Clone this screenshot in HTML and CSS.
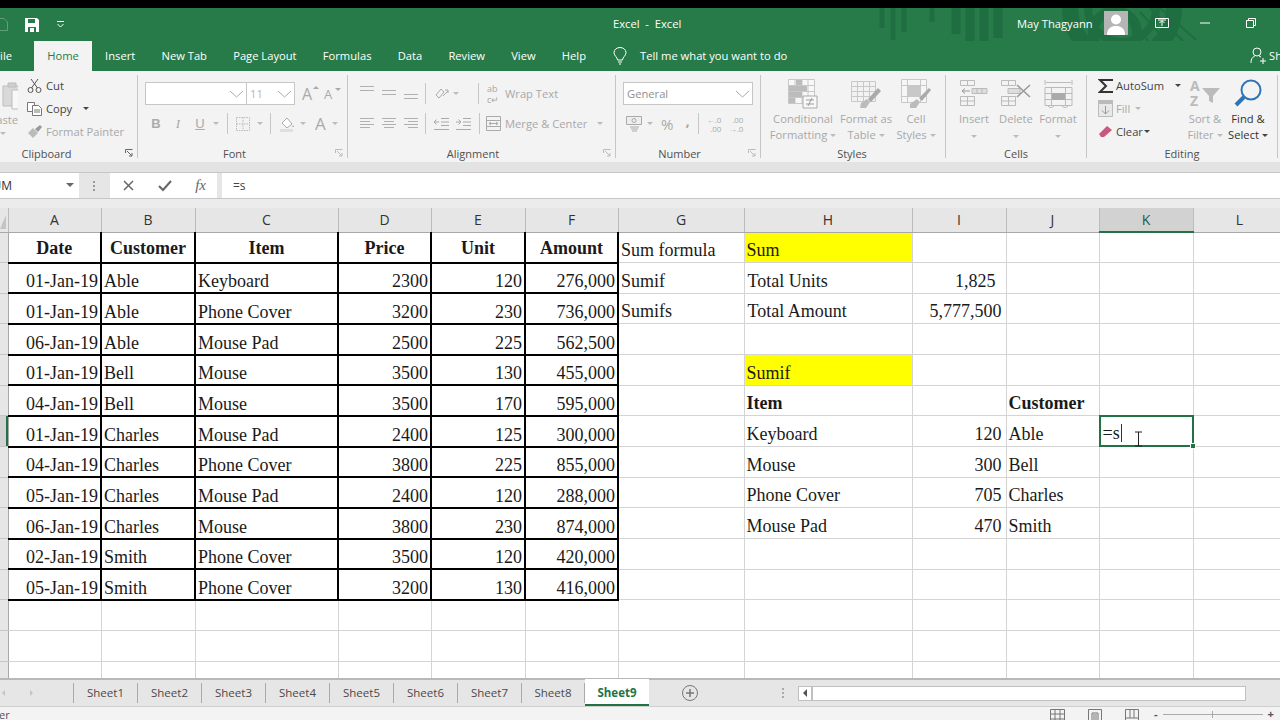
FILE: index.html
```html
<!DOCTYPE html>
<html lang="en">
<head>
<meta charset="utf-8">
<title>Excel - Excel</title>
<link rel="stylesheet" href="styles.css">
</head>
<body>
<div class="app">
  <div class="blackbar"></div>
  <header class="titlebar">
    <svg class="deco" width="400" height="63" viewBox="0 0 400 63" fill="none" stroke="#1f6e41">
      <g stroke-width="5"><path d="M22 0v20M33 0v32M44 0v24"/><path d="M72 0v14" /></g>
      <g stroke-width="9"><path d="M96 0v26M110 0v34M124 0v36M138 0v30"/></g>
      <circle cx="262" cy="0" r="52" stroke-width="16"/>
      <circle cx="262" cy="0" r="34" stroke-width="8"/>
      <circle cx="255" cy="25" r="22" stroke-width="10"/>
      <g stroke-width="2"><path d="M290 0l40 40M300 0l36 32M280 4l40 44M270 12l36 42"/></g>
    </svg>
    <div class="qat">
      <svg class="newdoc" width="8" height="13" viewBox="0 0 8 13" fill="none" stroke="#5f9f79"><path d="M-2 .5h6l3.500 3.500v8.500h-9.500"/></svg>
      <svg class="save" width="16" height="16" viewBox="0 0 16 16"><path d="M1 1h12l2 2v12H1z" fill="#fff"/><path d="M4 2h7v4H4z" fill="#267b49"/><path d="M4 10h8v5H4z" fill="#267b49"/><path d="M6 11h4v4H6z" fill="#fff"/></svg>
      <svg class="qatmore" width="9" height="9" viewBox="0 0 9 9" fill="none" stroke="#fff"><path d="M1 1.500h7"/><path d="M1.500 4l3 3 3-3"/></svg>
    </div>
    <div class="doc">Excel&nbsp; -&nbsp; Excel</div>
    <div class="account">
      <span class="user">May Thagyann</span>
      <span class="avatar"><svg width="24" height="24" viewBox="0 0 24 24" fill="#fff"><circle cx="12" cy="8.500" r="5"/><path d="M3 24c0-6 3-8 7-9h4c4 1 7 3 7 9z"/></svg></span>
      <svg class="winbtn first" width="14" height="12" viewBox="0 0 14 12" fill="none" stroke="#fff"><path d="M.5 1.500h13v9H.5z"/><path d="M7 9V4M4.500 6L7 3.500 9.500 6M3 3h8" /></svg>
      <svg class="winbtn min" width="10" height="2" viewBox="0 0 10 2"><path d="M0 1h10" stroke="#fff"/></svg>
      <svg class="winbtn rest" width="10" height="10" viewBox="0 0 10 10" fill="none" stroke="#fff"><path d="M.5 2.500h7v7h-7z"/><path d="M2.500 2.500v-2h7v7h-2"/></svg>
    </div>
  </header>
  <nav class="tabs">
    <span class="tab filetab">File</span>
    <span class="tab active">Home</span>
    <span class="tab">Insert</span>
    <span class="tab">New Tab</span>
    <span class="tab">Page Layout</span>
    <span class="tab">Formulas</span>
    <span class="tab">Data</span>
    <span class="tab">Review</span>
    <span class="tab">View</span>
    <span class="tab">Help</span>
    <svg class="bulb" width="14" height="18" viewBox="0 0 14 18" fill="none" stroke="#fff"><path d="M4.500 13c0-3-3.500-4-3.500-7.500a6 5 0 0 1 12 0C13 9 9.500 10 9.500 13z"/><path d="M5 15h4M6 17h2"/></svg>
    <span class="tab tell">Tell me what you want to do</span>
    <span class="share">
      <svg width="16" height="17" viewBox="0 0 16 17" fill="none" stroke="#fff"><circle cx="7" cy="5" r="4"/><path d="M1 16c0-5 2-6 4-7M9 9l2 1M10 14h6M13 11v6"/></svg>
      <span>Sh</span>
    </span>
  </nav>

  <section class="ribbon">
    <div class="group g-clip">
      <div class="body">
        <div class="paste">
          <svg width="30" height="30" viewBox="0 0 30 30" fill="none" stroke="#bdbdbd"><path d="M3 6h18v20H3z" fill="#d9d9d9"/><path d="M8 3h8v4H8z" fill="#cfcfcf"/><path d="M12 10h9l6 6v13H12z" fill="#f8f8f8"/></svg>
          <span>Paste</span>
          <i class="caret"></i>
        </div>
        <div class="cliplist">
          <div class="ci dark"><svg width="15" height="15" viewBox="0 0 15 15" fill="none" stroke="#555"><circle cx="3.500" cy="12" r="2.500"/><circle cx="11.500" cy="12" r="2.500"/><path d="M4.500 10L11 1M10.500 10L4 1"/></svg><span>Cut</span></div>
          <div class="ci dark"><svg width="15" height="15" viewBox="0 0 15 15" fill="#fff" stroke="#777"><path d="M.5 1.500h7v9h-7z"/><path d="M5.500 4.500h6l3 3v7h-9z"/><path d="M7 9h6M7 11h6" /></svg><span>Copy</span><i class="caret dk"></i></div>
          <div class="ci"><svg width="15" height="15" viewBox="0 0 15 15"><path d="M1 9l5-5 5 5-5 5z" fill="#bbb"/><path d="M8 5l5-4 2 2-4 5z" fill="#999"/></svg><span>Format Painter</span></div>
        </div>
      </div>
      <div class="label lb-clip">Clipboard</div>
      <svg class="launcher" width="8" height="8" viewBox="0 0 8 8" fill="none" stroke="#666"><path d="M.5 4V.5H7.500M2 2l5 5M4 7h3V4"/></svg>
    </div>

    <div class="group g-font">
      <div class="body rows">
        <div class="row">
          <div class="combo fontname"><svg class="chev" width="15" height="8" viewBox="0 0 15 8" fill="none" stroke="#aaa"><path d="M1 1l6.500 6L14 1"/></svg></div>
          <div class="combo fontsize"><span>11</span><svg class="chev" width="15" height="8" viewBox="0 0 15 8" fill="none" stroke="#aaa"><path d="M1 1l6.500 6L14 1"/></svg></div>
          <span class="growa big">A<i class="up"></i></span>
          <span class="growa small">A<i class="dn"></i></span>
        </div>
        <div class="row lower">
          <b class="btn22 fb">B</b><i class="btn22 fi">I</i><u class="btn22 fu">U</u><i class="caret btn10"></i>
          <span class="vsep s1"></span>
          <svg class="btn-ic" width="14" height="14" viewBox="0 0 14 14" fill="none" stroke="#bbb" stroke-dasharray="1.500 1"><path d="M.5.500h13v13H.5zM7 .5v13M.5 7h13"/></svg>
          <i class="caret btn18"></i>
          <span class="vsep s2"></span>
          <svg class="btn-fill" width="16" height="16" viewBox="0 0 16 16"><path d="M3 7l5-5 5 6-5 4z" fill="#fff" stroke="#aaa"/><path d="M1 13h13v3H1z" fill="#dfdfdf"/><path d="M14 9l1 2-2 0z" fill="#aaa"/></svg>
          <i class="caret btn12"></i>
          <span class="fcolor">A</span>
          <i class="caret btn12b"></i>
        </div>
      </div>
      <div class="label lb-font">Font</div>
      <svg class="launcher" width="8" height="8" viewBox="0 0 8 8" fill="none" stroke="#bbb"><path d="M.5 4V.5H7.500M2 2l5 5M4 7h3V4"/></svg>
    </div>

    <div class="group g-align">
      <div class="body rows">
        <div class="row al1">
          <span class="lines ta"><i></i><i></i></span><span class="lines tm"><i></i><i></i></span><span class="lines tb"><i></i><i></i></span>
          <span class="vsep s3"></span>
          <svg class="orient" width="15" height="14" viewBox="0 0 15 14" fill="none" stroke="#aaa"><path d="M2 8l5-6 3 3-5 6zM9 9l5-5M11 3h3v3"/></svg>
          <i class="caret al"></i>
          <span class="vsep s4"></span>
          <span class="abc">ab<br>c↵</span>
          <span class="gt wrap">Wrap Text</span>
        </div>
        <div class="row lower al2">
          <span class="lines al-l"><i></i><i></i><i></i><i></i></span><span class="lines al-c"><i></i><i></i><i></i><i></i></span><span class="lines al-r"><i></i><i></i><i></i><i></i></span>
          <span class="vsep s3b"></span>
          <svg class="indent" width="15" height="14" viewBox="0 0 15 14" fill="none" stroke="#aaa"><path d="M7 1.500h8M7 5h8M7 8.500h8M0 12.500h15M5 5H0M2.500 2.500L0 5l2.500 2.500"/></svg>
          <svg class="indent2" width="15" height="14" viewBox="0 0 15 14" fill="none" stroke="#aaa"><path d="M7 1.500h8M7 5h8M7 8.500h8M0 12.500h15M0 5h5M2.500 2.500L5 5 2.500 7.500"/></svg>
          <span class="vsep s4b"></span>
          <svg class="merge" width="15" height="15" viewBox="0 0 15 15" fill="none" stroke="#aaa"><path d="M.5.500h14v14H.5zM.5 4.500h14M.5 10.500h14M3 7.500h9M3 7.500l2-1.500M3 7.500l2 1.500M12 7.500l-2-1.500M12 7.500l-2 1.500"/></svg>
          <span class="gt mc">Merge &amp; Center</span>
          <i class="caret mcar"></i>
        </div>
      </div>
      <div class="label lb-align">Alignment</div>
      <svg class="launcher" width="8" height="8" viewBox="0 0 8 8" fill="none" stroke="#bbb"><path d="M.5 4V.5H7.500M2 2l5 5M4 7h3V4"/></svg>
    </div>

    <div class="group g-num">
      <div class="body rows">
        <div class="row">
          <div class="combo general"><span>General</span><svg class="chev" width="15" height="8" viewBox="0 0 15 8" fill="none" stroke="#aaa"><path d="M1 1l6.500 6L14 1"/></svg></div>
        </div>
        <div class="row lower">
          <svg class="cur" width="17" height="16" viewBox="0 0 17 16" fill="none" stroke="#aaa"><path d="M.5.500h15v8H.5z" fill="#eee"/><path d="M4 11h9M5 13h7M6 15h5"/><circle cx="8" cy="4.500" r="2"/></svg>
          <i class="caret cc"></i>
          <span class="pct">%</span>
          <span class="comma">,</span>
          <span class="vsep s5"></span>
          <span class="dec d1">←.0<br>.00</span>
          <span class="dec d2">.00<br>→.0</span>
        </div>
      </div>
      <div class="label lb-num">Number</div>
      <svg class="launcher" width="8" height="8" viewBox="0 0 8 8" fill="none" stroke="#bbb"><path d="M.5 4V.5H7.500M2 2l5 5M4 7h3V4"/></svg>
    </div>

    <div class="group g-styles">
      <div class="body big3">
        <div class="bigbtn cf">
          <svg width="30" height="30" viewBox="0 0 30 30" fill="#f8f8f8" stroke="#c8c8c8"><path d="M.5.500h26v24H.5z"/><path d="M.5 6.500h26M.5 12.500h26M.5 18.500h26M7 .5v24M14 .5v24M20 .5v24"/><path d="M8 1h6v5H8zM1 7h18v5H1zM1 13h13v5H1zM1 19h6v5H1z" fill="#bcbcbc" stroke="none"/><path d="M15 17h14v12H15z" fill="#f8f8f8" stroke="#aaa"/><path d="M18 21h8M18 25h8M24 19l-4 8" stroke="#999"/></svg>
          <span>Conditional</span><span>Formatting <i class="caret in"></i></span>
        </div>
        <div class="bigbtn fat">
          <svg width="31" height="30" viewBox="0 0 31 30" fill="#f2f2f2" stroke="#c8c8c8"><path d="M.5 2.500h24v20H.5z"/><path d="M.5 7.500h24M.5 12.500h24M.5 17.500h24M6.500 2.500v20M12.500 2.500v20M18.500 2.500v20"/><path d="M27 9l3 3-10 11-3-3z" fill="#aaa" stroke="none"/><path d="M10 24l6-4 3 3-4 6-6 0z" fill="#bbb" stroke="none"/></svg>
          <span>Format as</span><span>Table <i class="caret in"></i></span>
        </div>
        <div class="bigbtn cs">
          <svg width="30" height="30" viewBox="0 0 30 30" fill="#f6f6f6" stroke="#c8c8c8"><path d="M.5.500h25v23H.5z"/><path d="M.5 6.500h25M6.500.5v23M19.500.5v23M.5 17.500h25"/><path d="M7 7h12v10H7z" fill="#c8c8c8" stroke="none"/><path d="M28 9l2 2-9 11-3-3z" fill="#aaa" stroke="none"/><path d="M9 25l7-5 3 3-4 6-6 0z" fill="#bbb" stroke="none"/></svg>
          <span>Cell</span><span>Styles <i class="caret in"></i></span>
        </div>
      </div>
      <div class="label lb-sty">Styles</div>
    </div>

    <div class="group g-cells">
      <div class="body big3">
        <div class="bigbtn ins">
          <svg width="28" height="30" viewBox="0 0 28 30" fill="none" stroke="#bbb"><path d="M.5 1.500h14v5H.5zM7.500 1.500v5M.5 17.500h14v9H.5zM7.500 17.500v9M.5 22h14"/><path d="M12 9.500h15v5H12zM17 9.500v5M22 9.500v5" fill="#ddd"/><path d="M2 12h8M2 12l3-2.500M2 12l3 2.500" stroke="#999"/></svg>
          <span>Insert</span><i class="caret alone"></i>
        </div>
        <div class="bigbtn del">
          <svg width="30" height="30" viewBox="0 0 30 30" fill="none" stroke="#bbb"><path d="M.5 1.500h14v5H.5zM7.500 1.500v5M.5 17.500h14v9H.5zM7.500 17.500v9M.5 22h14"/><path d="M7 9.500h12v5H7z" fill="#ddd"/><path d="M16 6l13 12M29 6L16 18" stroke="#999" stroke-width="1.500"/></svg>
          <span>Delete</span><i class="caret alone"></i>
        </div>
        <div class="bigbtn fmt">
          <svg width="29" height="30" viewBox="0 0 29 30" fill="none" stroke="#bbb"><path d="M1 1v5M28 1v5M2 3.500h25"/><path d="M1 8.500h27v18H1zM1 14.500h27M1 20.500h27M7.500 8.500v18M21.500 8.500v18"/><path d="M8 14h13v7H8z" fill="#aaa" stroke="none"/><path d="M4 27c1 2 5 2 6 0M18 27c1 2 5 2 6 0"/></svg>
          <span>Format</span><i class="caret alone"></i>
        </div>
      </div>
      <div class="label lb-cells">Cells</div>
    </div>

    <div class="group g-edit">
      <div class="body">
        <div class="editlist">
          <div class="ei dk"><svg class="sigma" width="16" height="16" viewBox="0 0 16 16" fill="none" stroke="#333" stroke-width="2"><path d="M15 2H2l6 6-6 6h13"/></svg><span>AutoSum</span><i class="caret dk sum"></i></div>
          <div class="ei"><svg width="15" height="17" viewBox="0 0 15 17" fill="#e8e8e8" stroke="#bbb"><path d="M.5.500h14v16H.5z"/><path d="M.5.500h14v3H.5z" fill="#bbb"/><path d="M7.500 6v8M4 10.500l3.500 3.500 3.500-3.500" fill="none" stroke="#999"/></svg><span>Fill</span><i class="caret fl"></i></div>
          <div class="ei dk"><svg width="15" height="13" viewBox="0 0 15 13"><path d="M1 9l8-8 5 4-8 7H3z" fill="#c9587f"/></svg><span>Clear</span><i class="caret dk cl"></i></div>
        </div>
        <div class="bigbtn sort">
          <svg width="32" height="30" viewBox="0 0 32 30"><text x="1" y="12" class="az">A</text><text x="1" y="27" class="az">Z</text><path d="M13 9h18l-7 8v7l-4-2v-5z" fill="#bbb"/></svg>
          <span>Sort &amp;</span><span>Filter <i class="caret in"></i></span>
        </div>
        <div class="bigbtn find dk">
          <svg width="28" height="30" viewBox="0 0 28 30" fill="none" stroke="#2f75b5"><circle cx="17" cy="11" r="9.500" stroke-width="2"/><path d="M10 18L2 26" stroke-width="4"/></svg>
          <span>Find &amp;</span><span>Select <i class="caret in dk"></i></span>
        </div>
      </div>
      <div class="label lb-edit">Editing</div>
    </div>
  </section>

  <div class="fstrip"></div>
  <div class="formula">
    <div class="namebox"><span>SUM</span><i class="caret dk nb"></i></div>
    <span class="grip"></span>
    <div class="fbtns">
      <svg width="11" height="11" viewBox="0 0 11 11" stroke="#666" stroke-width="1.500"><path d="M1 1l9 9M10 1l-9 9"/></svg>
      <svg width="14" height="12" viewBox="0 0 14 12" fill="none" stroke="#666" stroke-width="2"><path d="M1 6l4 4 8-9"/></svg>
      <span class="fx">fx</span>
    </div>
    <div class="finput">=s</div>
  </div>
  <div class="gap"></div>

  <main class="sheet">
    <table class="grid">
      <colgroup><col class="c0"><col class="c1"><col class="c2"><col class="c3"><col class="c4"><col class="c5"><col class="c6"><col class="c7"><col class="c8"><col class="c9"><col class="c10"><col class="c11"><col class="c12"></colgroup>
      <tr class="colhead"><th class="corner"><i></i></th><th>A</th><th>B</th><th>C</th><th>D</th><th>E</th><th>F</th><th>G</th><th>H</th><th>I</th><th>J</th><th class="cur-col">K</th><th>L</th></tr>
      <tr class="toprow"><th class="rh"></th><td class="b hd">Date</td><td class="b hd">Customer</td><td class="b hd">Item</td><td class="b hd">Price</td><td class="b hd">Unit</td><td class="b hd">Amount</td><td>Sum formula</td><td class="y">Sum</td><td></td><td></td><td></td><td></td></tr>
      <tr><th class="rh"></th><td class="b n">01-Jan-19</td><td class="b">Able</td><td class="b">Keyboard</td><td class="b n">2300</td><td class="b n">120</td><td class="b n">276,000</td><td>Sumif</td><td class="in1">Total Units</td><td class="n acc">1,825</td><td></td><td></td><td></td></tr>
      <tr><th class="rh"></th><td class="b n">01-Jan-19</td><td class="b">Able</td><td class="b">Phone Cover</td><td class="b n">3200</td><td class="b n">230</td><td class="b n">736,000</td><td>Sumifs</td><td class="in1">Total Amount</td><td class="n">5,777,500</td><td></td><td></td><td></td></tr>
      <tr><th class="rh"></th><td class="b n">06-Jan-19</td><td class="b">Able</td><td class="b">Mouse Pad</td><td class="b n">2500</td><td class="b n">225</td><td class="b n">562,500</td><td></td><td></td><td></td><td></td><td></td><td></td></tr>
      <tr><th class="rh"></th><td class="b n">01-Jan-19</td><td class="b">Bell</td><td class="b">Mouse</td><td class="b n">3500</td><td class="b n">130</td><td class="b n">455,000</td><td></td><td class="y">Sumif</td><td></td><td></td><td></td><td></td></tr>
      <tr><th class="rh"></th><td class="b n">04-Jan-19</td><td class="b">Bell</td><td class="b">Mouse</td><td class="b n">3500</td><td class="b n">170</td><td class="b n">595,000</td><td></td><td class="bold">Item</td><td></td><td class="bold">Customer</td><td></td><td></td></tr>
      <tr><th class="rh cur-row"></th><td class="b n">01-Jan-19</td><td class="b">Charles</td><td class="b">Mouse Pad</td><td class="b n">2400</td><td class="b n">125</td><td class="b n">300,000</td><td></td><td>Keyboard</td><td class="n">120</td><td>Able</td><td class="sel"><div class="selbox">=s<i class="textcaret"></i><span class="handle"></span></div><svg class="ibeam" width="9" height="16" viewBox="0 0 9 16" fill="none" stroke="#222"><path d="M1 1h7M4.500 1v14M1 15h7"/></svg></td><td></td></tr>
      <tr><th class="rh"></th><td class="b n">04-Jan-19</td><td class="b">Charles</td><td class="b">Phone Cover</td><td class="b n">3800</td><td class="b n">225</td><td class="b n">855,000</td><td></td><td>Mouse</td><td class="n">300</td><td>Bell</td><td></td><td></td></tr>
      <tr><th class="rh"></th><td class="b n">05-Jan-19</td><td class="b">Charles</td><td class="b">Mouse Pad</td><td class="b n">2400</td><td class="b n">120</td><td class="b n">288,000</td><td></td><td>Phone Cover</td><td class="n">705</td><td>Charles</td><td></td><td></td></tr>
      <tr><th class="rh"></th><td class="b n">06-Jan-19</td><td class="b">Charles</td><td class="b">Mouse</td><td class="b n">3800</td><td class="b n">230</td><td class="b n">874,000</td><td></td><td>Mouse Pad</td><td class="n">470</td><td>Smith</td><td></td><td></td></tr>
      <tr><th class="rh"></th><td class="b n">02-Jan-19</td><td class="b">Smith</td><td class="b">Phone Cover</td><td class="b n">3500</td><td class="b n">120</td><td class="b n">420,000</td><td></td><td></td><td></td><td></td><td></td><td></td></tr>
      <tr><th class="rh"></th><td class="b n">05-Jan-19</td><td class="b">Smith</td><td class="b">Phone Cover</td><td class="b n">3200</td><td class="b n">130</td><td class="b n">416,000</td><td></td><td></td><td></td><td></td><td></td><td></td></tr>
      <tr><th class="rh"></th><td></td><td></td><td></td><td></td><td></td><td></td><td></td><td></td><td></td><td></td><td></td><td></td></tr>
      <tr><th class="rh"></th><td></td><td></td><td></td><td></td><td></td><td></td><td></td><td></td><td></td><td></td><td></td><td></td></tr>
      <tr><th class="rh"></th><td></td><td></td><td></td><td></td><td></td><td></td><td></td><td></td><td></td><td></td><td></td><td></td></tr>
    </table>
  </main>

  <footer class="sheetbar">
    <div class="navs"><i class="tri l"></i><i class="tri r"></i></div>
    <span class="stab">Sheet1</span><span class="stab">Sheet2</span><span class="stab">Sheet3</span><span class="stab">Sheet4</span><span class="stab">Sheet5</span><span class="stab">Sheet6</span><span class="stab">Sheet7</span><span class="stab">Sheet8</span><span class="stab on">Sheet9</span>
    <svg class="plus" width="16" height="16" viewBox="0 0 16 16" fill="none" stroke="#777"><circle cx="8" cy="8" r="7.500"/><path d="M8 4v8M4 8h8" stroke-width="1.500"/></svg>
    <span class="dots"></span>
    <div class="scroll"><span class="sleft"><i></i></span><span class="sthumb"></span></div>
  </footer>
  <div class="status">
    <span class="ready">Enter</span>
    <svg class="v1" width="15" height="14" viewBox="0 0 15 14" fill="none" stroke="#777"><path d="M.5.500h14v14H.5zM.5 5h14M.5 10h14M5 .5v14M10 .5v14"/></svg>
    <svg class="v2" width="14" height="14" viewBox="0 0 14 14" fill="none" stroke="#777"><path d="M.5.500h13v14H.5zM4 4h6v10H4zM5 6h4M5 8h4M5 10h4"/></svg>
    <svg class="v3" width="14" height="14" viewBox="0 0 14 14" fill="none" stroke="#777"><path d="M.5 14V.5h13V14M.5 9h13M5 .5V9M9 .5V9"/></svg>
    <span class="zm">-</span><span class="slider"><i></i></span><span class="zp">+</span>
  </div>
</div>
</body>
</html>
```
FILE: styles.css
```css
* { box-sizing: border-box; }
html, body { margin: 0; padding: 0; }
body { width: 1280px; height: 720px; overflow: hidden; font-family: "Open Sans", "Noto Sans", sans-serif; font-size: 11.200px; color: #444; background: #f3f3f3; }
i { font-style: normal; }
.app { width: 1280px; height: 720px; display: flex; flex-direction: column; overflow: hidden; }
.blackbar { height: 8px; background: #000; flex: none; }

.titlebar { height: 33px; flex: none; background: #267b49; position: relative; display: flex; align-items: center; color: #fff; }
.deco { position: absolute; left: 860px; top: 0; }
.qat { display: flex; align-items: center; position: relative; }
.newdoc { margin-right: 16px; }
.qatmore { margin-left: 16px; }
.doc { position: absolute; left: 613px; top: 7px; line-height: 17px; }
.account { position: absolute; left: 1017px; top: 3px; display: flex; align-items: center; height: 24px; }
.user { width: 87px; }
.avatar { width: 24px; height: 24px; background: #b5b5b5; display: block; overflow: hidden; }
.winbtn { flex: none; }
.winbtn.first { margin-left: 27px; }
.winbtn.min { margin-left: 31px; }
.winbtn.rest { margin-left: 36px; }

.tabs { height: 30px; flex: none; background: #267b49; display: flex; align-items: stretch; color: #fff; position: relative; }
.tab { display: flex; align-items: center; padding: 0 13.100px 2px; white-space: nowrap; }
.tab.filetab { margin-left: -14px; width: 48px; justify-content: flex-end; padding: 0 22px 2px 0; }
.tab.active { background: #f3f3f3; color: #267b49; width: 58px; padding: 0 0 2px; justify-content: center; }
.bulb { align-self: center; margin-left: 14px; margin-right: -1px; }
.tab.tell { padding-left: 14px; }
.share { position: absolute; left: 1250px; top: 6px; display: flex; gap: 3px; align-items: center; }

.ribbon { height: 91px; flex: none; background: #f3f3f3; display: flex; padding-top: 4px; padding-bottom: 4px; color: #a8a8a8; }
.group { height: 83px; flex: none; border-right: 1px solid #c6c6c6; position: relative; display: flex; flex-direction: column; }
.body { height: 71px; display: flex; flex: none; }
.label { height: 12px; line-height: 15px; text-align: center; color: #505050; font-size: 11px; white-space: nowrap; }
.launcher { position: absolute; right: 4px; bottom: 1px; }
.caret { display: inline-block; width: 0; height: 0; border: 3px solid transparent; border-top-color: #bbb; border-bottom: 0; vertical-align: middle; }
.caret.dk { border-top-color: #444; }
.g-clip { width: 138px; }
.lb-clip { padding-right: 44px; }
.paste { width: 18px; flex: none; overflow: hidden; display: flex; flex-direction: column; align-items: flex-end; padding-top: 5px; margin-right: 9px; position: relative; }
.paste svg { flex: none; margin-right: -12px; }
.paste span { line-height: 14px; margin-top: 3px; }
.paste .caret { align-self: flex-start; margin-top: 5px; }
.cliplist { display: flex; flex-direction: column; margin-top: -1px; }
.ci { height: 23px; display: flex; align-items: center; gap: 4px; white-space: nowrap; }
.ci.dark { color: #444; }
.ci .caret { margin-left: 7px; }

.g-font { width: 210px; padding-left: 7px; }
.lb-font { padding-right: 23px; }
.rows { flex-direction: column; padding-top: 7px; }
.row { display: flex; align-items: center; height: 23px; flex: none; }
.row.lower { margin-top: 7px; height: 23px; }
.combo { height: 23px; border: 1px solid #c6c6c6; background: #fff; display: flex; align-items: center; justify-content: space-between; padding: 0 2px 0 3px; flex: none; }
.fontname { width: 102px; justify-content: flex-end; }
.fontsize { width: 49px; margin-left: -1px; }
.fontsize span { color: #b5b5b5; }
.growa { position: relative; color: #aaa; }
.growa.big { font-size: 16px; margin-left: 7px; width: 22px; }
.growa.small { font-size: 13px; margin-left: 0; width: 16px; }
.growa i { position: absolute; left: 11px; top: 3px; border: 3px solid transparent; }
.growa .up { border-bottom-color: #aaa; border-top: 0; }
.growa .dn { border-top-color: #aaa; border-bottom: 0; }
.btn22 { width: 22px; text-align: center; color: #aaa; flex: none; font-family: "Liberation Sans", sans-serif; font-size: 13px; }
.fi { font-style: italic; font-family: "Liberation Serif", serif; }
.btn10 { margin: 0 0 0 2px; }
.vsep { width: 1px; height: 21px; background: #c6c6c6; flex: none; }
.vsep.s1 { margin-left: 8px; }
.btn-ic { margin-left: 8px; }
.btn18 { margin-left: 7px; }
.vsep.s2 { margin-left: 7px; }
.btn-fill { margin-left: 8px; }
.btn12 { margin-left: 5px; }
.fcolor { margin-left: 9px; font-size: 17px; color: #aaa; line-height: 20px; }
.btn12b { margin-left: 6px; }

.g-align { width: 268px; padding-left: 8px; }
.lb-align { padding-right: 25px; }
.lines { display: flex; flex-direction: column; width: 22px; height: 22px; padding: 0 4px; flex: none; }
.lines i { display: block; height: 1px; background: #b0b0b0; margin-bottom: 2px; width: 14px; }
.ta { padding-top: 3px; }
.ta i, .tm i, .tb i { margin-bottom: 3px; }
.tm { padding-top: 7px; }
.tb { padding-top: 11px; }
.al-l, .al-c, .al-r { padding-top: 5px; }
.al-l i:nth-child(even) { width: 10px; }
.al-c i:nth-child(even) { width: 10px; margin-left: 2px; }
.al-r i:nth-child(even) { width: 10px; margin-left: 4px; }
.s3, .s3b { margin-left: 3px; }
.orient, .indent { margin-left: 8px; }
.indent2 { margin-left: 7px; }
.caret.al { margin-left: 4px; }
.s4 { margin-left: 19px; }
.s4b { margin-left: 8px; }
.abc { font-size: 9px; line-height: 11px; margin-left: 8px; width: 14px; flex: none; }
.gt { color: #a8a8a8; white-space: nowrap; }
.wrap { margin-left: 4px; }
.merge { margin-left: 6px; }
.mc { margin-left: 4px; }
.mcar { margin-left: 10px; }

.g-num { width: 145px; padding-left: 7px; }
.lb-num { padding-right: 24px; }
.general { width: 130px; }
.general span { color: #909090; }
.cur { margin-left: 3px; }
.caret.cc { margin-left: 4px; }
.pct { font-size: 15px; margin-left: 8px; color: #aaa; }
.comma { font-size: 15px; font-weight: 700; margin-left: 12px; width: 8px; margin-top: -8px; color: #aaa; }
.s5 { margin-left: 5px; }
.dec { font-size: 8px; line-height: 9px; width: 16px; text-align: right; flex: none; color: #aaa; white-space: nowrap; }
.d1 { margin-left: 6px; }
.d2 { margin-left: 6px; }

.g-styles { width: 185px; }
.lb-sty { padding-right: 2px; }
.big3 { position: relative; }
.bigbtn { display: flex; flex-direction: column; align-items: center; padding-top: 4px; line-height: 16px; flex: none; white-space: nowrap; }
.bigbtn svg { margin-bottom: 2px; flex: none; }
.caret.in { margin-bottom: 1px; }
.cf { width: 78px; margin-left: 3px; }
.fat { width: 52px; margin-left: -2px; }
.cs { width: 46px; margin-left: 1px; }

.g-cells { width: 141px; }
.lb-cells { padding-right: 0; }
.ins { width: 42px; margin-left: 7px; }
.del { width: 42px; margin-left: 0; }
.fmt { width: 42px; margin-left: 0; }
.caret.alone { margin-top: 8px; }

.g-edit { width: 191px; }
.lb-edit { padding-right: 0; }
.editlist { width: 98px; flex: none; padding-left: 11px; margin-top: -1px; display: flex; flex-direction: column; }
.ei { height: 23px; display: flex; align-items: center; gap: 3px; }
.ei svg { flex: none; }
.ei .sigma { margin-right: -1px; }
.ei.dk { color: #444; }
.caret.sum { margin-left: 8px; }
.caret.cl { margin-left: -2px; }
.caret.fl { margin-left: 2px; }
.sort { width: 40px; }
.az { font: 700 14px "Open Sans", sans-serif; fill: #bbb; }
.find { width: 46px; }
.bigbtn.dk { color: #333; }

.fstrip { height: 11px; flex: none; background: #e3e3e3; border-bottom: 1px solid #c6c6c6; }
.formula { height: 26px; flex: none; background: #e6e6e6; display: flex; align-items: stretch; border-bottom: 1px solid #c6c6c6; }
.namebox { width: 79px; background: #fff; display: flex; align-items: center; overflow: hidden; position: relative; flex: none; }
.namebox span { margin-left: -14px; color: #333; font-size: 12px; }
.caret.nb { position: absolute; left: 66px; top: 10px; border-width: 4px; border-bottom: 0; border-top-color: #666; }
.grip { width: 2px; height: 12px; margin: 0 15px 0 14px; align-self: center; flex: none; background: radial-gradient(circle, #999 1px, transparent 1.200px) 0 0 / 2px 4px; }
.fbtns { width: 107px; background: #fff; display: flex; align-items: center; justify-content: space-between; padding: 0 11px 0 13px; flex: none; margin-right: 5px; }
.fx { font-family: "Liberation Serif", serif; font-style: italic; font-size: 15px; color: #666; }
.finput { flex: 1; background: #fff; padding-left: 11px; line-height: 25px; color: #444; font-size: 12px; }
.gap { height: 9px; flex: none; background: #ececec; }

.sheet { height: 470px; flex: none; overflow: hidden; background: #fff; }
.grid { border-collapse: collapse; table-layout: fixed; width: 1286px; font-family: "Liberation Serif", serif; font-size: 18px; color: #1a1a1a; }
.c0 { width: 8px; } .c1 { width: 93px; } .c2 { width: 94px; } .c3 { width: 143px; } .c4 { width: 93px; } .c5 { width: 94px; } .c6 { width: 93px; } .c7 { width: 126px; } .c8 { width: 168px; } .c9 { width: 94px; } .c10 { width: 93px; } .c11 { width: 94px; } .c12 { width: 93px; }
.colhead th { height: 24px; background: #e6e6e6; font-family: "Open Sans", sans-serif; font-weight: 400; font-size: 14px; color: #333; border-right: 1px solid #bcbcbc; border-bottom: 1px solid #a8a8a8; padding: 0; }
.corner { position: relative; }
.corner i { position: absolute; left: 0; bottom: 3px; border-right: 6px solid #c4c4c4; border-top: 14px solid transparent; }
.colhead .cur-col { background: #d2d2d2; border-bottom: 2px solid #217346; color: #1f5c3c; }
tr { height: 30.670px; }
tr.colhead { height: 24px; }
td { border: 1px solid #d4d4d4; padding: 0 4px 1px 2px; vertical-align: bottom; white-space: nowrap; line-height: 21px; overflow: visible; }
.toprow td { border-top-color: #a8a8a8; }
td.b { border: 2px solid #000; padding: 0 2px; }
td.b:nth-child(2) { border-left: 1px solid #c6c6c6; }
.toprow td.b { border-top: 1px solid #a8a8a8; }
td.n { text-align: right; }
td.hd { font-weight: 700; text-align: center; vertical-align: middle; padding-top: 2px; }
td.bold { font-weight: 700; }
td.y { background: #ff0; }
td.in1 { padding-left: 3px; }
td.acc { padding-right: 10px; }
th.rh { background: #e6e6e6; border-right: 1px solid #a8a8a8; border-bottom: 1px solid #c6c6c6; padding: 0; }
th.cur-row { background: #d2d2d2; box-shadow: inset -2px 0 0 #217346; }
td.sel { position: relative; padding: 0; }
.selbox { position: absolute; left: -1px; top: -1px; right: -1px; bottom: -1px; border: 2px solid #217346; padding: 6px 0 0 2px; line-height: 20px; }
.textcaret { display: inline-block; width: 1px; height: 18px; background: #333; vertical-align: -3px; margin-left: 1px; }
.handle { position: absolute; right: -4px; bottom: -4px; width: 6px; height: 6px; background: #217346; border: 1px solid #fff; }
.ibeam { position: absolute; left: 34px; top: 15px; }

.sheetbar { height: 28px; flex: none; background: #e6e6e6; border-top: 2px solid #b8b8b8; display: flex; align-items: center; position: relative; font-size: 11.500px; }
.navs { width: 73px; height: 100%; flex: none; display: flex; align-items: center; }
.tri { display: block; border: 3px solid transparent; }
.tri.l { border-right-color: #c4c4c4; border-left: 0; margin-left: 2px; }
.tri.r { border-left-color: #c4c4c4; border-right: 0; margin-left: 25px; }
.stab { width: 64px; height: 20px; flex: none; border-left: 1px solid #aaa; text-align: center; line-height: 20px; color: #4a4a4a; }
.stab:nth-of-type(8) { border-right: 1px solid #aaa; }
.stab.on { background: #fff; color: #217346; font-weight: 700; height: 27px; line-height: 28px; border: 0; border-bottom: 2px solid #217346; align-self: flex-start; margin-top: -1px; }
.plus { margin-left: 33px; flex: none; }
.dots { width: 2px; height: 12px; margin-left: 84px; flex: none; background: radial-gradient(circle, #aaa 1px, transparent 1.200px) 0 0 / 2px 4px; }
.scroll { width: 448px; height: 15px; margin-left: 14px; flex: none; border: 1px solid #c0c0c0; background: #fff; display: flex; }
.sleft { width: 14px; border-right: 2px solid #c0c0c0; display: flex; align-items: center; justify-content: center; }
.sleft i { border: 4px solid transparent; border-right-color: #555; border-left: 0; }
.status { height: 14px; flex: none; background: #f3f3f3; border-top: 1px solid #cfcfcf; position: relative; display: flex; align-items: flex-start; overflow: hidden; color: #555; }
.ready { margin-left: -18px; line-height: 15px; width: 1068px; flex: none; }
.v1, .v2, .v3 { flex: none; margin-top: 2px; }
.v2 { margin-left: 23px; }
.v3 { margin-left: 23px; }
.zm { margin-left: 15px; font-weight: 700; line-height: 13px; }
.slider { width: 100px; height: 1px; background: #aaa; margin: 7px 0 0 5px; position: relative; }
.slider i { position: absolute; left: 49px; top: -3px; width: 1px; height: 7px; background: #aaa; }
.zp { margin-left: 5px; font-weight: 700; line-height: 13px; }
```
